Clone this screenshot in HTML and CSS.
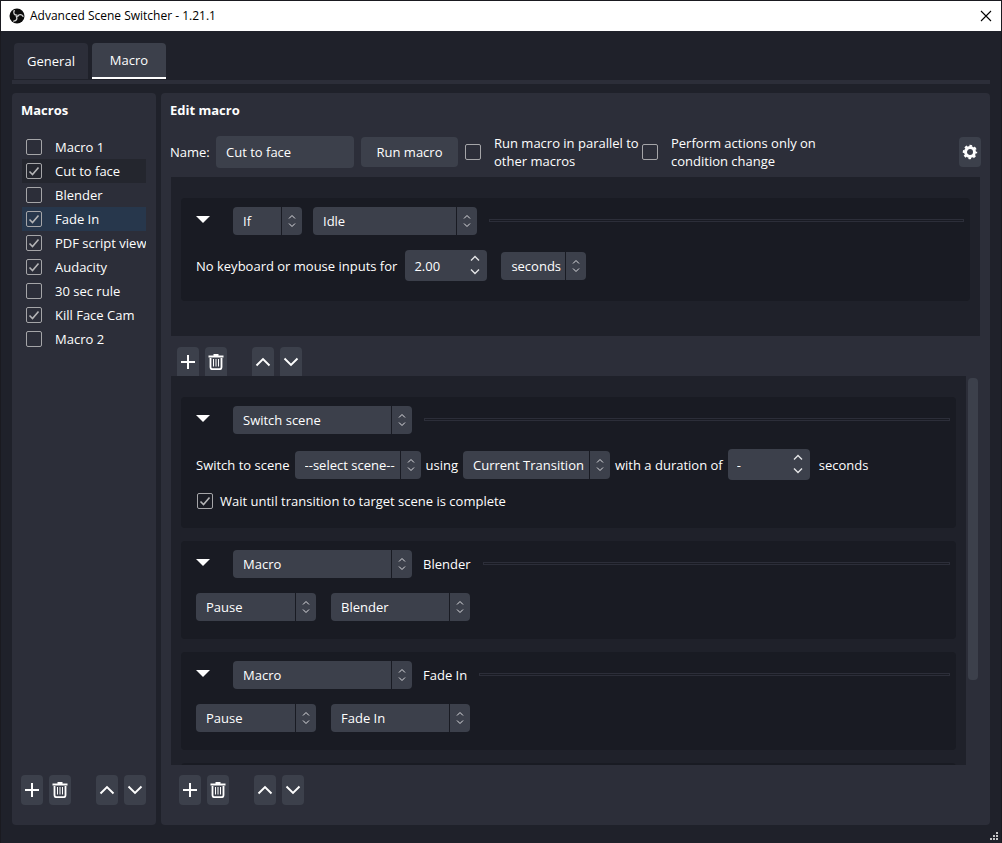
FILE: index.html
```html
<!DOCTYPE html>
<html lang="en">
<head>
<meta charset="utf-8">
<title>Advanced Scene Switcher - 1.21.1</title>
<link rel="stylesheet" href="styles.css">
</head>
<body>
<svg class="defs" aria-hidden="true">
  <symbol id="plus" viewBox="0 0 16 16"><path d="M8 1v14M1 8h14" fill="none" stroke="currentColor" stroke-width="2"/></symbol>
  <symbol id="trash" viewBox="0 0 16 16"><path d="M.5 2.500h15M5.500 1h5" fill="none" stroke="currentColor" stroke-width="1.800"/><path d="M2.500 4v9.200a2 2 0 0 0 2 2h7a2 2 0 0 0 2-2V4" fill="none" stroke="currentColor" stroke-width="1.800"/><path d="M5.500 5v7.500M8 5v7.500M10.500 5v7.500" fill="none" stroke="currentColor" stroke-width="1"/></symbol>
  <symbol id="up" viewBox="0 0 16 16"><path d="M1.500 11.500 8 5l6.500 6.500" fill="none" stroke="currentColor" stroke-width="1.900"/></symbol>
  <symbol id="down" viewBox="0 0 16 16"><path d="M1.500 4.500 8 11l6.500-6.500" fill="none" stroke="currentColor" stroke-width="1.900"/></symbol>
  <symbol id="updown" viewBox="0 0 8 14"><path d="M1 4.500 4 1.500l3 3M1 9.500l3 3 3-3" fill="none" stroke="#dcdce0" stroke-width="1"/></symbol>
  <symbol id="spin" viewBox="0 0 10 20"><path d="M1 5.500l4-4 4 4M1 14.500l4 4 4-4" fill="none" stroke="#e4e4e6" stroke-width="1.400"/></symbol>
  <symbol id="caret" viewBox="0 0 14 8"><path d="M0 0h14L7 7z" fill="currentColor"/></symbol>
</svg>
<div class="window">
  <header class="titlebar">
    <svg class="logo" viewBox="0 0 16 16" aria-hidden="true">
      <circle cx="8" cy="8" r="7.500" fill="#0b0b0b"/>
      <g fill="none" stroke="#d8d8d8" stroke-width="1.300" stroke-linecap="round">
        <path d="M5.200 2.600C4 5 5.300 7.300 8 7.200"/>
        <path d="M5.200 2.600C4 5 5.300 7.300 8 7.200" transform="rotate(120 8 8)"/>
        <path d="M5.200 2.600C4 5 5.300 7.300 8 7.200" transform="rotate(240 8 8)"/>
      </g>
    </svg>
    <span class="title">Advanced Scene Switcher - 1.21.1</span>
    <button class="close" aria-label="Close"><svg viewBox="0 0 12 12"><path d="M1 1l10 10M11 1 1 11" fill="none" stroke="currentColor" stroke-width="1.100"/></svg></button>
  </header>

  <nav class="tabs">
    <button class="tab">General</button>
    <button class="tab active">Macro</button>
  </nav>

  <main class="content">
    <section class="panel sidebar">
      <h2>Macros</h2>
      <div class="macro-list">
        <label><input type="checkbox"><span>Macro 1</span></label>
        <label class="hover"><input type="checkbox" checked><span>Cut to face</span></label>
        <label><input type="checkbox"><span>Blender</span></label>
        <label class="selected"><input type="checkbox" checked><span>Fade In</span></label>
        <label><input type="checkbox" checked><span>PDF script viewer</span></label>
        <label><input type="checkbox" checked><span>Audacity</span></label>
        <label><input type="checkbox"><span>30 sec rule</span></label>
        <label><input type="checkbox" checked><span>Kill Face Cam</span></label>
        <label><input type="checkbox"><span>Macro 2</span></label>
      </div>
      <div class="toolbar">
        <button class="icon" aria-label="Add macro"><svg><use href="#plus"/></svg></button>
        <button class="icon" aria-label="Remove macro"><svg><use href="#trash"/></svg></button>
        <button class="icon gap" aria-label="Move macro up"><svg><use href="#up"/></svg></button>
        <button class="icon" aria-label="Move macro down"><svg><use href="#down"/></svg></button>
      </div>
    </section>

    <section class="panel editor">
      <h2>Edit macro</h2>
      <div class="name-row">
        <label class="name-label" for="name">Name:</label>
        <input class="name" id="name" type="text" value="Cut to face">
        <button class="run">Run macro</button>
        <label class="option"><input type="checkbox"><span>Run macro in parallel to<br>other macros</span></label>
        <label class="option"><input type="checkbox"><span>Perform actions only on<br>condition change</span></label>
        <button class="icon settings" aria-label="Settings"><svg viewBox="0 0 16 16"><circle cx="8" cy="8" r="4.500" fill="none" stroke="currentColor" stroke-width="3"/><circle cx="8" cy="8" r="6.200" fill="none" stroke="currentColor" stroke-width="2" stroke-dasharray="2.600 2.270" stroke-dashoffset="1.300"/></svg></button>
      </div>

      <div class="conditions">
        <article class="card">
          <div class="head">
            <button class="fold" aria-label="Collapse"><svg><use href="#caret"/></svg></button>
            <span class="combo w-logic"><select aria-label="Logic"><option>If</option></select><svg><use href="#updown"/></svg></span>
            <span class="combo w-condition"><select aria-label="Condition"><option>Idle</option></select><svg><use href="#updown"/></svg></span>
            <hr>
          </div>
          <div class="line">
            <label for="idle">No keyboard or mouse inputs for</label>
            <span class="spin"><input id="idle" type="text" value="2.00"><svg><use href="#spin"/></svg></span>
            <span class="combo w-unit"><select aria-label="Unit"><option>seconds</option></select><svg><use href="#updown"/></svg></span>
          </div>
        </article>
      </div>

      <div class="toolbar middle">
        <button class="icon" aria-label="Add condition"><svg><use href="#plus"/></svg></button>
        <button class="icon" aria-label="Remove condition"><svg><use href="#trash"/></svg></button>
        <button class="icon gap" aria-label="Move condition up"><svg><use href="#up"/></svg></button>
        <button class="icon" aria-label="Move condition down"><svg><use href="#down"/></svg></button>
      </div>

      <div class="actions-row">
        <div class="actions">
          <article class="card">
            <div class="head">
              <button class="fold" aria-label="Collapse"><svg><use href="#caret"/></svg></button>
              <span class="combo w-action"><select aria-label="Action"><option>Switch scene</option></select><svg><use href="#updown"/></svg></span>
              <hr>
            </div>
            <div class="line tight">
              <label for="scene">Switch to scene</label>
              <span class="combo w-scene"><select id="scene"><option>--select scene--</option></select><svg><use href="#updown"/></svg></span>
              <label for="transition">using</label>
              <span class="combo w-transition"><select id="transition"><option>Current Transition</option></select><svg><use href="#updown"/></svg></span>
              <label for="duration">with a duration of</label>
              <span class="spin"><input id="duration" type="text" value="-"><svg><use href="#spin"/></svg></span>
              <span class="suffix">seconds</span>
            </div>
            <label class="wait"><input type="checkbox" checked><span>Wait until transition to target scene is complete</span></label>
          </article>
          <article class="card">
            <div class="head">
              <button class="fold" aria-label="Collapse"><svg><use href="#caret"/></svg></button>
              <span class="combo w-action"><select aria-label="Action"><option>Macro</option></select><svg><use href="#updown"/></svg></span>
              <span>Blender</span>
              <hr>
            </div>
            <div class="line wide">
              <span class="combo w-verb"><select aria-label="Operation"><option>Pause</option></select><svg><use href="#updown"/></svg></span>
              <span class="combo w-target"><select aria-label="Macro"><option>Blender</option></select><svg><use href="#updown"/></svg></span>
            </div>
          </article>
          <article class="card">
            <div class="head">
              <button class="fold" aria-label="Collapse"><svg><use href="#caret"/></svg></button>
              <span class="combo w-action"><select aria-label="Action"><option>Macro</option></select><svg><use href="#updown"/></svg></span>
              <span>Fade In</span>
              <hr>
            </div>
            <div class="line wide">
              <span class="combo w-verb"><select aria-label="Operation"><option>Pause</option></select><svg><use href="#updown"/></svg></span>
              <span class="combo w-target"><select aria-label="Macro"><option>Fade In</option></select><svg><use href="#updown"/></svg></span>
            </div>
          </article>
          <article class="card"></article>
        </div>
        <div class="track"><div class="thumb"></div></div>
      </div>

      <div class="toolbar bottom">
        <button class="icon" aria-label="Add action"><svg><use href="#plus"/></svg></button>
        <button class="icon" aria-label="Remove action"><svg><use href="#trash"/></svg></button>
        <button class="icon gap" aria-label="Move action up"><svg><use href="#up"/></svg></button>
        <button class="icon" aria-label="Move action down"><svg><use href="#down"/></svg></button>
      </div>
    </section>
  </main>
  <footer class="grip">
    <svg viewBox="0 0 8 8" aria-hidden="true"><path d="M6 0h2v2H6zM3 3h2v2H3zM6 3h2v2H6zM0 6h2v2H0zM3 6h2v2H3zM6 6h2v2H6z" fill="#c4c4c6"/></svg>
  </footer>
</div>
</body>
</html>
```
FILE: styles.css
```css
:root {
  --bg: #1f212a;
  --panel: #2c2e39;
  --control: #3c404b;
  --card: #191b23;
  --text: #fefefe;
}

* { box-sizing: border-box; }

body {
  margin: 0;
  background: var(--bg);
  color: var(--text);
  font: 13px/18px "Open Sans", "Noto Sans", sans-serif;
}

button, input, select {
  margin: 0;
  border: 0;
  padding: 0;
  color: inherit;
  font: inherit;
}

.defs { display: none; }

.window {
  display: flex;
  flex-direction: column;
  height: 100vh;
  border: 1px solid #1a1a20;
  border-bottom: 0;
}

.titlebar {
  display: flex;
  align-items: center;
  flex: none;
  height: 30px;
  padding: 0 9px 0 8px;
  background: #fff;
  color: #000;
  font: 12px/16px "Open Sans", sans-serif;
}
.logo { width: 16px; height: 16px; margin-right: 5px; }
.close {
  display: flex;
  margin-left: auto;
  background: none;
}
.close svg { width: 12px; height: 12px; }

.tabs {
  display: flex;
  flex: none;
  gap: 4px;
  margin: 12px 11px 0;
  padding: 0 2px 1px;
  border-bottom: 4px solid var(--panel);
}
.tab {
  width: 74px;
  height: 36px;
  border-radius: 4px 4px 0 0;
  background: var(--panel);
}
.tab.active {
  border-bottom: 2px solid #fff;
  background: var(--control);
}

.content {
  display: flex;
  flex: 1;
  gap: 5px;
  min-height: 0;
  margin: 9px 11px 0;
}
.panel {
  display: flex;
  flex-direction: column;
  border-radius: 4px;
  background: var(--panel);
  padding: 8px 9px 20px;
}
.sidebar { flex: none; width: 144px; }
.editor { flex: 1; min-width: 0; }

h2 {
  flex: none;
  margin: 0;
  font-size: 13px;
  line-height: 18px;
  font-weight: 700;
}

input[type="checkbox"] {
  flex: none;
  appearance: none;
  width: 16px;
  height: 16px;
  border: 1px solid #a5a5a8;
  border-radius: 2px;
}
input[type="checkbox"]:checked {
  background: url("data:image/svg+xml,%3Csvg xmlns='http://www.w3.org/2000/svg' viewBox='0 0 14 14'%3E%3Cpath d='M2.500 7.500 5.500 10.500 11.500 3.500' fill='none' stroke='%23b4b4b6' stroke-width='1.600'/%3E%3C/svg%3E") center / 14px no-repeat;
}

.macro-list {
  flex: 1;
  margin: 16px 1px 0;
}
.macro-list label {
  display: flex;
  align-items: center;
  gap: 13px;
  height: 24px;
  padding-left: 4px;
  overflow: hidden;
  white-space: nowrap;
}
.macro-list .hover { background: #24262e; }
.macro-list .selected { background: #27374c; }

.toolbar { display: flex; flex: none; gap: 6px; }
.icon {
  display: grid;
  place-items: center;
  width: 22px;
  height: 30px;
  border-radius: 4px;
  background: var(--control);
}
.icon svg { width: 16px; height: 16px; }
.gap { margin-left: 19px; }
.middle { padding: 11px 7px 0; }
.middle .icon { height: 29px; border-radius: 4px 4px 0 0; }
.bottom { padding: 10px 9px 0; }

.name-row {
  display: flex;
  align-items: center;
  flex: none;
  gap: 7px;
  margin-top: 15px;
  height: 36px;
}
.name-label { flex: none; width: 39px; }
.name {
  flex: none;
  width: 138px;
  height: 32px;
  border-radius: 4px;
  padding: 0 10px;
  background: var(--control);
}
.run {
  flex: none;
  width: 97px;
  height: 30px;
  border-radius: 4px;
  background: var(--control);
}
.option {
  display: flex;
  align-items: center;
  gap: 13px;
  white-space: nowrap;
}
.option span { width: 141px; }
.settings { margin-left: auto; }

.conditions {
  flex: none;
  margin: 7px 1px 0;
  padding: 21px 10px 35px;
  background: var(--bg);
}
.actions-row {
  display: flex;
  flex: 1;
  gap: 2px;
  min-height: 0;
  margin: 0 3px 0 1px;
}
.actions {
  display: flex;
  flex: 1;
  flex-direction: column;
  gap: 13px;
  min-width: 0;
  overflow: hidden;
  padding: 21px 10px 0;
  background: var(--bg);
}
.track { width: 10px; padding-top: 2px; }
.thumb { height: 78%; border-radius: 4px; background: var(--control); }

.card {
  flex: none;
  border-radius: 4px;
  background: var(--card);
  padding: 9px 6px 18px 15px;
}
.conditions .card { padding-bottom: 20px; }
.head { display: flex; align-items: center; gap: 11px; }
.fold {
  display: flex;
  width: 26px;
  height: 11px;
  background: none;
}
.fold svg { width: 14px; height: 8px; }
.head hr {
  flex: 1;
  height: 3px;
  margin: 0 0 2px 1px;
  border: 1px solid var(--panel);
}

.line { display: flex; align-items: center; margin-top: 15px; }
.line.tight { gap: 5px; }
.line.wide { gap: 15px; }
.conditions .line { gap: 8px; }
.line label, .suffix { white-space: nowrap; }
.suffix { padding-left: 4px; }

.combo, .spin { position: relative; flex: none; }
.combo select {
  display: block;
  appearance: none;
  width: 100%;
  height: 28px;
  border-radius: 4px;
  padding: 0 21px 0 10px;
  background: var(--control);
}
.combo svg {
  position: absolute;
  top: 0;
  right: 0;
  width: 21px;
  height: 28px;
  padding: 7px 6px;
  border-left: 1px solid var(--card);
  pointer-events: none;
}
.spin input {
  display: block;
  width: 82px;
  height: 31px;
  border-radius: 4px;
  padding: 0 24px 0 9px;
  background: var(--control);
}
.spin svg {
  position: absolute;
  top: 5px;
  right: 7px;
  width: 10px;
  height: 20px;
  pointer-events: none;
}

.w-logic { width: 69px; }
.w-condition { width: 164px; }
.w-unit { width: 85px; }
.conditions .w-unit { margin-left: 6px; }
.w-action { width: 179px; }
.w-scene { width: 126px; }
.w-transition { width: 147px; }
.w-verb { width: 120px; }
.w-target { width: 139px; }

.wait { display: flex; align-items: center; gap: 7px; margin: 12px 0 0 1px; }

.grip {
  display: flex;
  flex: none;
  justify-content: flex-end;
  align-items: flex-end;
  height: 18px;
  padding: 0 3px 3px;
}
.grip svg { width: 8px; height: 8px; }
```
